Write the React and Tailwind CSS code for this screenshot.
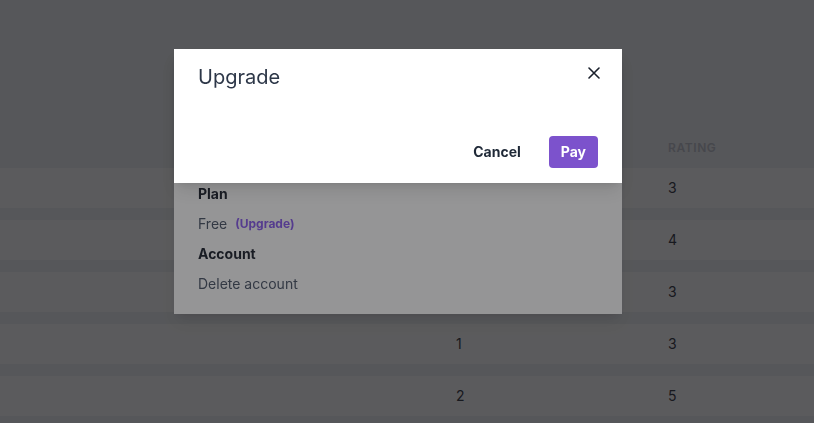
export default function App() {
  const rows = [
    { count: '', rating: '3' },
    { count: '', rating: '4' },
    { count: '', rating: '3' },
    { count: '1', rating: '3' },
    { count: '2', rating: '5' },
  ];

  return (
    <div className="relative min-h-[423px] overflow-hidden bg-[#eef0f4] font-[Inter,ui-sans-serif,sans-serif]">
      {/* page underneath */}
      <div className="pt-[128px]">
        <div className="flex h-10 items-center text-xs font-semibold uppercase tracking-wider text-[#b8bcc6]">
          <div className="w-[668px]" />
          <div className="flex-1">Rating</div>
        </div>
        <div className="flex flex-col gap-3">
          {rows.map((r, i) => (
            <div key={i} className="flex h-10 items-center bg-white text-sm text-[#1a202c]">
              <div className="w-[456px]" />
              <div className="w-[212px]">{r.count}</div>
              <div className="flex-1">{r.rating}</div>
            </div>
          ))}
        </div>
      </div>

      {/* settings modal */}
      <div className="fixed inset-0 flex items-start bg-[#18181b]/[0.46] pl-[174px] pt-[49px]">
        <div className="flex w-[448px] flex-col bg-white shadow-lg">
          <div className="h-[135px]" />
          <div className="flex flex-col gap-[10px] px-6 pb-5 text-sm leading-5">
            <div className="font-bold text-[#1a202c]">Plan</div>
            <div className="flex items-center text-[#4a5568]">
              Free
              <span className="ml-2 text-xs font-bold text-[#8a5cf0]">(Upgrade)</span>
            </div>
            <div className="font-bold text-[#1a202c]">Account</div>
            <div className="text-[#4a5568]">Delete account</div>
          </div>
        </div>
      </div>

      {/* upgrade modal */}
      <div className="fixed inset-0 flex items-start bg-[#18181b]/[0.46] pl-[174px] pt-[49px]">
        <div className="relative flex w-[448px] flex-col bg-white shadow-lg">
          <div className="px-6 py-4 text-xl leading-6 text-[#2d3748]">Upgrade</div>
          <button className="absolute right-3 top-2 flex h-8 w-8 items-center justify-center text-[#1a202c]">
            <svg width="12" height="12" viewBox="0 0 12 12" fill="none" stroke="currentColor" strokeWidth="1.6" strokeLinecap="round">
              <path d="M1 1L11 11M11 1L1 11" />
            </svg>
          </button>
          <div className="flex items-center justify-end px-6 pb-[15px] pt-[31px]">
            <button className="mr-3 flex h-8 items-center px-4 text-sm font-bold text-[#1f2937]">Cancel</button>
            <button className="flex h-8 items-center rounded bg-[#7c52cc] px-3 text-sm font-bold text-white">Pay</button>
          </div>
        </div>
      </div>
    </div>
  );
}
